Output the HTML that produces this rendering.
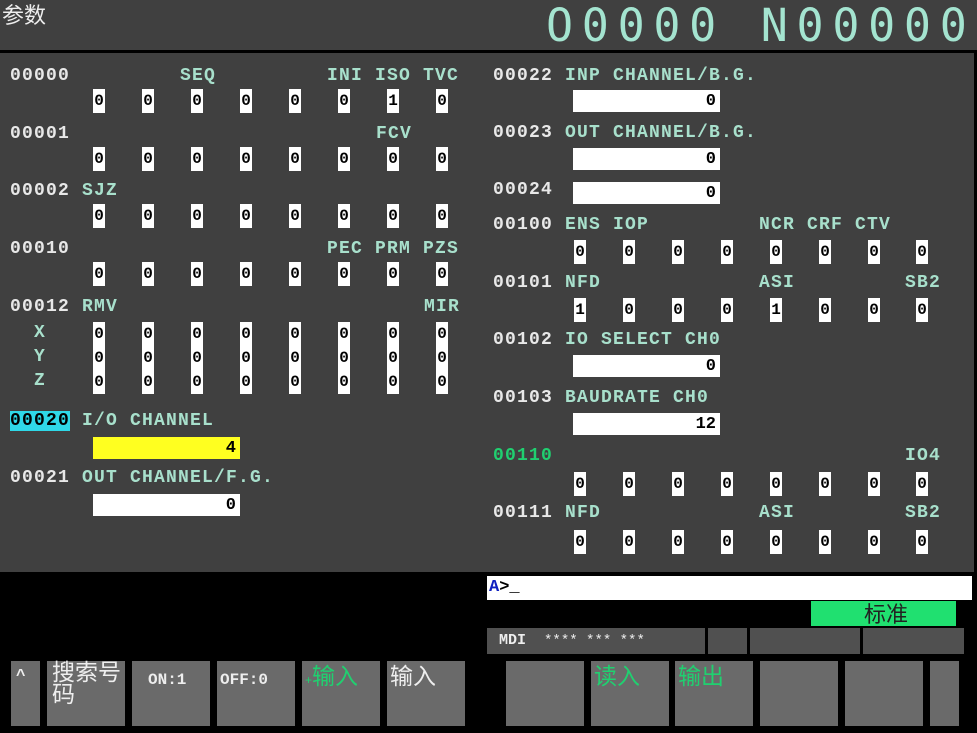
<!DOCTYPE html>
<html><head><meta charset="utf-8"><style>
body{margin:0;width:977px;height:733px;background:#000;position:relative;overflow:hidden;font-family:"Liberation Mono",monospace;}
.hd{position:absolute;left:0;top:0;width:977px;height:50px;background:#404040}
.ln{position:absolute;left:0;top:50px;width:977px;height:3px;background:#000}
.mn{position:absolute;left:0;top:53px;width:974px;height:519px;background:#404040}
.t{position:absolute;font-size:18px;font-weight:bold;letter-spacing:1.2px;line-height:18px;color:#e8e8e8;white-space:pre}
.g{color:#a8e0cc}
.b{position:absolute;width:12px;height:24px;background:#fff;color:#000;font-size:16px;font-weight:bold;line-height:24px;text-align:center}
.v{position:absolute;width:147px;height:22px;background:#fff;color:#000;font-size:17px;font-weight:bold;line-height:23px;text-align:right;box-sizing:border-box;padding-right:4px}
.k{position:absolute;top:661px;height:65px;width:78px;background:#6a6a6a;font-family:"Liberation Sans","Noto Sans CJK SC",sans-serif;color:#eee;font-size:23px;line-height:22px}
.s{position:absolute;top:628px;height:26px;background:#505050}
</style></head><body>
<div class="hd"></div><div class="ln"></div><div class="mn"></div>
<div style="position:absolute;left:2px;top:0;color:#eee;font-size:22px;font-family:'Noto Sans CJK SC',sans-serif;line-height:28px">参数</div>
<div style="position:absolute;left:546px;top:1px;width:440px;white-space:nowrap;color:#a4e4d0;font-size:45px;letter-spacing:8.7px;line-height:50px;font-family:'DejaVu Sans Mono',monospace">O0000 N00000</div>

<div class="t" style="left:10px;top:67px">00000</div><div class="t g" style="left:180px;top:67px">SEQ</div><div class="t g" style="left:327px;top:67px">INI ISO TVC</div>
<div class="t" style="left:10px;top:125px">00001</div><div class="t g" style="left:376px;top:125px">FCV</div>
<div class="t" style="left:10px;top:182px">00002 <span class="g">SJZ</span></div>
<div class="t" style="left:10px;top:240px">00010</div><div class="t g" style="left:327px;top:240px">PEC PRM PZS</div>
<div class="t" style="left:10px;top:298px">00012 <span class="g">RMV</span></div><div class="t g" style="left:424px;top:298px">MIR</div>
<div class="t g" style="left:34px;top:324px">X</div><div class="t g" style="left:34px;top:348px">Y</div><div class="t g" style="left:34px;top:372px">Z</div>
<div class="t" style="left:10px;top:412px"><span style="background:#2fd8e8;color:#000">00020</span> <span class="g">I/O CHANNEL</span></div>
<div class="v" style="left:93px;top:437px;background:#ffff20">4</div>
<div class="t" style="left:10px;top:469px">00021 <span class="g">OUT CHANNEL/F.G.</span></div>
<div class="v" style="left:93px;top:494px">0</div>

<div class="t" style="left:493px;top:67px">00022 <span class="g">INP CHANNEL/B.G.</span></div>
<div class="v" style="left:573px;top:90px">0</div>
<div class="t" style="left:493px;top:124px">00023 <span class="g">OUT CHANNEL/B.G.</span></div>
<div class="v" style="left:573px;top:148px">0</div>
<div class="t" style="left:493px;top:181px">00024</div>
<div class="v" style="left:573px;top:182px">0</div>
<div class="t" style="left:493px;top:216px">00100 <span class="g">ENS IOP</span></div><div class="t g" style="left:759px;top:216px">NCR CRF CTV</div>
<div class="t" style="left:493px;top:274px">00101 <span class="g">NFD</span></div><div class="t g" style="left:759px;top:274px">ASI</div><div class="t g" style="left:905px;top:274px">SB2</div>
<div class="t" style="left:493px;top:331px">00102 <span class="g">IO SELECT CH0</span></div>
<div class="v" style="left:573px;top:355px">0</div>
<div class="t" style="left:493px;top:389px">00103 <span class="g">BAUDRATE CH0</span></div>
<div class="v" style="left:573px;top:413px">12</div>
<div class="t" style="left:493px;top:447px;color:#20d070">00110</div><div class="t g" style="left:905px;top:447px">IO4</div>
<div class="t" style="left:493px;top:504px">00111 <span class="g">NFD</span></div><div class="t g" style="left:759px;top:504px">ASI</div><div class="t g" style="left:905px;top:504px">SB2</div>

<div id="bits">
<div class="b" style="left:93px;top:89px">0</div><div class="b" style="left:142px;top:89px">0</div><div class="b" style="left:191px;top:89px">0</div><div class="b" style="left:240px;top:89px">0</div><div class="b" style="left:289px;top:89px">0</div><div class="b" style="left:338px;top:89px">0</div><div class="b" style="left:387px;top:89px">1</div><div class="b" style="left:436px;top:89px">0</div>
<div class="b" style="left:93px;top:147px">0</div><div class="b" style="left:142px;top:147px">0</div><div class="b" style="left:191px;top:147px">0</div><div class="b" style="left:240px;top:147px">0</div><div class="b" style="left:289px;top:147px">0</div><div class="b" style="left:338px;top:147px">0</div><div class="b" style="left:387px;top:147px">0</div><div class="b" style="left:436px;top:147px">0</div>
<div class="b" style="left:93px;top:204px">0</div><div class="b" style="left:142px;top:204px">0</div><div class="b" style="left:191px;top:204px">0</div><div class="b" style="left:240px;top:204px">0</div><div class="b" style="left:289px;top:204px">0</div><div class="b" style="left:338px;top:204px">0</div><div class="b" style="left:387px;top:204px">0</div><div class="b" style="left:436px;top:204px">0</div>
<div class="b" style="left:93px;top:262px">0</div><div class="b" style="left:142px;top:262px">0</div><div class="b" style="left:191px;top:262px">0</div><div class="b" style="left:240px;top:262px">0</div><div class="b" style="left:289px;top:262px">0</div><div class="b" style="left:338px;top:262px">0</div><div class="b" style="left:387px;top:262px">0</div><div class="b" style="left:436px;top:262px">0</div>
<div class="b" style="left:93px;top:322px">0</div><div class="b" style="left:142px;top:322px">0</div><div class="b" style="left:191px;top:322px">0</div><div class="b" style="left:240px;top:322px">0</div><div class="b" style="left:289px;top:322px">0</div><div class="b" style="left:338px;top:322px">0</div><div class="b" style="left:387px;top:322px">0</div><div class="b" style="left:436px;top:322px">0</div>
<div class="b" style="left:93px;top:346px">0</div><div class="b" style="left:142px;top:346px">0</div><div class="b" style="left:191px;top:346px">0</div><div class="b" style="left:240px;top:346px">0</div><div class="b" style="left:289px;top:346px">0</div><div class="b" style="left:338px;top:346px">0</div><div class="b" style="left:387px;top:346px">0</div><div class="b" style="left:436px;top:346px">0</div>
<div class="b" style="left:93px;top:370px">0</div><div class="b" style="left:142px;top:370px">0</div><div class="b" style="left:191px;top:370px">0</div><div class="b" style="left:240px;top:370px">0</div><div class="b" style="left:289px;top:370px">0</div><div class="b" style="left:338px;top:370px">0</div><div class="b" style="left:387px;top:370px">0</div><div class="b" style="left:436px;top:370px">0</div>
<div class="b" style="left:574px;top:240px">0</div><div class="b" style="left:623px;top:240px">0</div><div class="b" style="left:672px;top:240px">0</div><div class="b" style="left:721px;top:240px">0</div><div class="b" style="left:770px;top:240px">0</div><div class="b" style="left:819px;top:240px">0</div><div class="b" style="left:868px;top:240px">0</div><div class="b" style="left:916px;top:240px">0</div>
<div class="b" style="left:574px;top:298px">1</div><div class="b" style="left:623px;top:298px">0</div><div class="b" style="left:672px;top:298px">0</div><div class="b" style="left:721px;top:298px">0</div><div class="b" style="left:770px;top:298px">1</div><div class="b" style="left:819px;top:298px">0</div><div class="b" style="left:868px;top:298px">0</div><div class="b" style="left:916px;top:298px">0</div>
<div class="b" style="left:574px;top:472px">0</div><div class="b" style="left:623px;top:472px">0</div><div class="b" style="left:672px;top:472px">0</div><div class="b" style="left:721px;top:472px">0</div><div class="b" style="left:770px;top:472px">0</div><div class="b" style="left:819px;top:472px">0</div><div class="b" style="left:868px;top:472px">0</div><div class="b" style="left:916px;top:472px">0</div>
<div class="b" style="left:574px;top:530px">0</div><div class="b" style="left:623px;top:530px">0</div><div class="b" style="left:672px;top:530px">0</div><div class="b" style="left:721px;top:530px">0</div><div class="b" style="left:770px;top:530px">0</div><div class="b" style="left:819px;top:530px">0</div><div class="b" style="left:868px;top:530px">0</div><div class="b" style="left:916px;top:530px">0</div>
</div>

<div style="position:absolute;left:487px;top:576px;width:485px;height:24px;background:#fff;font-size:17px;font-weight:bold;line-height:24px;padding-left:2px;box-sizing:border-box"><span style="color:#1020c0">A</span>&gt;_</div>
<div style="position:absolute;left:811px;top:601px;width:145px;height:25px;background:#20e070;font-family:'Noto Sans CJK SC',sans-serif;font-size:22px;line-height:25px;color:#222;text-align:right;padding-right:48px;box-sizing:border-box">标准</div>
<div class="s" style="left:487px;width:218px;color:#eee;font-size:15px;line-height:26px;font-weight:bold;white-space:pre"><span style="padding-left:12px">MDI</span>  <span style="font-weight:normal;font-size:14px">**** *** ***</span></div>
<div class="s" style="left:708px;width:39px"></div>
<div class="s" style="left:750px;width:110px"></div>
<div class="s" style="left:863px;width:101px"></div>

<div class="k" style="left:11px;width:29px;font-size:16px;font-weight:bold;padding:4px 0 0 5px;box-sizing:border-box">^</div>
<div class="k" style="left:47px;padding:0 0 0 5px;box-sizing:border-box">搜索号<br>码</div>
<div class="k" style="left:132px;font-family:'Liberation Mono',monospace;font-weight:bold;font-size:16px;padding:8px 0 0 16px;box-sizing:border-box">ON:1</div>
<div class="k" style="left:217px;font-family:'Liberation Mono',monospace;font-weight:bold;font-size:16px;padding:8px 0 0 3px;box-sizing:border-box">OFF:0</div>
<div class="k" style="left:302px;color:#20d070;padding:4px 0 0 3px;box-sizing:border-box"><span style="font-size:12px">+</span>输入</div>
<div class="k" style="left:387px;padding:4px 0 0 3px;box-sizing:border-box">输入</div>
<div class="k" style="left:506px"></div>
<div class="k" style="left:591px;color:#20d070;padding:4px 0 0 3px;box-sizing:border-box">读入</div>
<div class="k" style="left:675px;color:#20d070;padding:4px 0 0 3px;box-sizing:border-box">输出</div>
<div class="k" style="left:760px"></div>
<div class="k" style="left:845px"></div>
<div class="k" style="left:930px;width:29px"></div>
</body></html>
